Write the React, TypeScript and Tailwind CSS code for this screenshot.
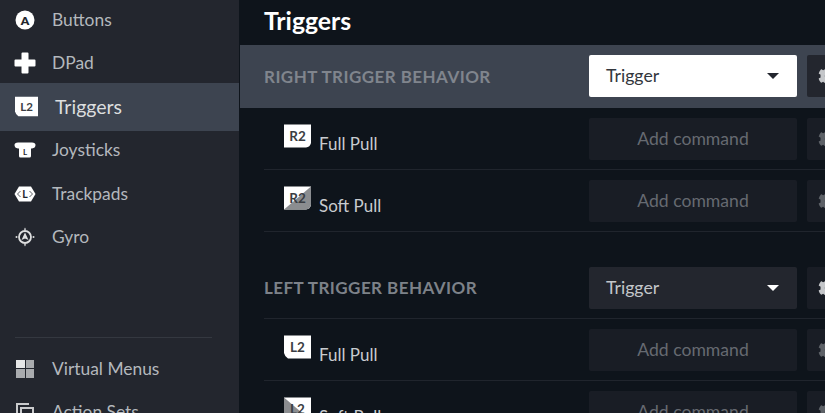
import React from 'react';
import { FaCog } from 'react-icons/fa';

const font = { fontFamily: 'Lato, sans-serif' };

const IconA = () => (
    <svg width="20" height="20" viewBox="0 0 20 20">
        <circle cx="10" cy="10" r="9.5" fill="#fff" />
        <text x="10" y="14.5" textAnchor="middle" fontSize="12" fontWeight="800" fill="#23262e" fontFamily="Lato, sans-serif">A</text>
    </svg>
);

const IconDPad = () => (
    <svg width="22" height="22" viewBox="0 0 22 22">
        <path d="M7.5 1.5a1 1 0 0 1 1-1h5a1 1 0 0 1 1 1V7.5h6a1 1 0 0 1 1 1v5a1 1 0 0 1-1 1h-6v6a1 1 0 0 1-1 1h-5a1 1 0 0 1-1-1v-6h-6a1 1 0 0 1-1-1v-5a1 1 0 0 1 1-1h6z" fill="#fff" />
    </svg>
);

// trigger key shape, cut corner on the outer side
const TriggerIcon = ({ label, side, half, small }: { label: string; side: 'L' | 'R'; half?: boolean; small?: boolean }) => {
    const d = side === 'R' ? 'M0 0.5H27V19Q26 23 22 23.5H0z' : 'M0 0.5H27V23.5H4Q1 22 0 18z';
    const halfD = side === 'R' ? 'M27 0.5V19Q26 23 22 23.5H0z' : 'M0 0.5L27 23.5H4Q1 22 0 18z';
    return (
        <svg width={small ? 23 : 27} height={small ? 21 : 24} viewBox="0 0 27 24">
            <path d={d} fill="#fff" />
            {half && <path d={halfD} fill="#8b8d90" />}
            <text x="13.5" y="17" textAnchor="middle" fontSize="13.5" fontWeight="700" fill="#3a3d43" fontFamily="Lato, sans-serif">{label}</text>
        </svg>
    );
};

const IconJoystick = () => (
    <svg width="22" height="16" viewBox="0 0 22 16">
        <path d="M0.5 3Q0.5 0.5 4 0.5H18Q21.5 0.5 21.5 3Q21.5 6 18 6.5H17V14Q17 15.5 15.5 15.5H6.5Q5 15.5 5 14V6.5H4Q0.5 6 0.5 3z" fill="#fff" />
        <text x="11" y="12.5" textAnchor="middle" fontSize="8" fontWeight="700" fill="#23262e" fontFamily="Lato, sans-serif">L</text>
    </svg>
);

const IconTrackpad = () => (
    <svg width="22" height="16" viewBox="0 0 22 16">
        <path d="M5 0.5H17L21.5 8L17 15.5H5L0.5 8z" fill="#fff" />
        <path d="M6.5 5L3.5 8L6.5 11M15.5 5L18.5 8L15.5 11" fill="none" stroke="#4a4d54" strokeWidth="0.9" />
        <text x="11" y="12" textAnchor="middle" fontSize="10.5" fontWeight="700" fill="#23262e" fontFamily="Lato, sans-serif">L</text>
    </svg>
);

const IconGyro = () => (
    <svg width="20" height="20" viewBox="0 0 20 20" fill="#dedfe0">
        <circle cx="10" cy="10" r="6" fill="none" stroke="#dedfe0" strokeWidth="1.8" />
        <path d="M10 5.5L13.5 13L10 11.5L6.5 13z" />
        <path d="M8.8 2.8L10 0.5L11.2 2.8zM8.8 17.2L10 19.5L11.2 17.2z" />
        <circle cx="1.5" cy="10" r="1" />
        <circle cx="18.5" cy="10" r="1" />
    </svg>
);

const IconMenus = () => (
    <div className="grid grid-cols-2 gap-[1px] w-[18px] h-[18px]">
        <div className="bg-[#e6e7e8]" />
        <div className="bg-[#a9abae]" />
        <div className="bg-[#a9abae]" />
        <div className="bg-[#a9abae]" />
    </div>
);

const IconSets = () => (
    <svg width="18" height="18" viewBox="0 0 18 18" fill="none" stroke="#c9cacc" strokeWidth="2">
        <path d="M1 13V1H13" />
        <rect x="5" y="5" width="12" height="12" />
    </svg>
);

const navItems = [
    { name: 'Buttons', icon: <IconA /> },
    { name: 'DPad', icon: <IconDPad /> },
    { name: 'Triggers', icon: <TriggerIcon label="L2" side="L" small />, active: true },
    { name: 'Joysticks', icon: <IconJoystick /> },
    { name: 'Trackpads', icon: <IconTrackpad /> },
    { name: 'Gyro', icon: <IconGyro /> },
];

const NavRow = ({ name, icon, active }: { name: string; icon: React.ReactNode; active?: boolean }) => (
    <div className={`flex items-center shrink-0 pl-[14px] ${active ? 'h-[48px] -mt-[2.5px] -mb-[2px] bg-[#3d4450] text-[#dcdedf] text-[19.5px]' : 'h-[43.5px] text-[#b4b8bd] text-[17.4px]'}`}>
        <div className={`flex items-center justify-center ${active ? 'w-[24px] mr-[17px]' : 'w-[22px] mr-[16px]'}`}>{icon}</div>
        <span>{name}</span>
    </div>
);

const GearBox = ({ dim, bg }: { dim?: boolean; bg: string }) => (
    <div className={`w-[42px] h-[42px] shrink-0 rounded-[2px] flex items-center justify-center ${bg}`}>
        <FaCog size={20} color={dim ? '#5d6167' : '#c4c6c9'} />
    </div>
);

const Select = ({ focused }: { focused?: boolean }) => (
    <div className={`w-[208px] h-[42px] shrink-0 rounded-[2px] flex items-center justify-between pl-[17px] pr-[18px] text-[17.7px] ${focused ? 'bg-white text-[#33373d]' : 'bg-[#23262e] text-[#c3c6ca]'}`}>
        <span className="pt-[1px]">Trigger</span>
        <div className={`w-0 h-0 border-x-[6px] border-x-transparent border-t-[6px] ${focused ? 'border-t-[#23262e]' : 'border-t-white'}`} />
    </div>
);

const PullRow = ({ label, icon }: { label: string; icon: React.ReactNode }) => (
    <div className="ml-6 h-[62px] pt-[1px] flex items-center border-b border-[#20252d]">
        <div className="ml-[20px] mr-[8px] -mt-[7px]">{icon}</div>
        <span className="text-[17px] text-[#c8cbcf] mt-[10px]">{label}</span>
        <div className="ml-auto flex items-center gap-[10px]">
            <div className="w-[208px] h-[42px] rounded-[2px] bg-[#191d25] flex items-center justify-center text-[17.6px] text-[#666a71]">Add command</div>
            <GearBox dim bg="bg-[#191d25]" />
        </div>
    </div>
);

const App: React.FC = () => {
    return (
        <div className="w-[825px] h-[413px] flex overflow-hidden bg-[#0e141b]" style={font}>
            <div className="w-[239px] shrink-0 h-full bg-[#23262e] flex flex-col overflow-hidden">
                <div className="-mt-[2px] flex flex-col">
                    {navItems.map((item) => (
                        <NavRow key={item.name} {...item} />
                    ))}
                </div>
                <div className="mt-[78px] ml-[15px] mr-[27px] border-t border-[#343840]" />
                <div className="mt-[9px] flex flex-col">
                    <NavRow name="Virtual Menus" icon={<IconMenus />} />
                    <NavRow name="Action Sets" icon={<IconSets />} />
                </div>
            </div>
            <div className="flex-1 min-w-0 overflow-hidden">
                <div className="w-[640px] pr-[31px] ml-[1px]">
                    <div className="h-[45px] pl-6 flex items-center pb-[4px] text-[24.8px] font-bold text-white">Triggers</div>
                    <div className="h-[63px] pb-[1px] pl-6 -mr-[31px] pr-[31px] bg-[#3d4450] flex items-center justify-between">
                        <span className="pt-[1px] text-[17px] font-bold tracking-[0.45px] text-[#80858d]">RIGHT TRIGGER BEHAVIOR</span>
                        <div className="flex items-center gap-[10px]">
                            <Select focused />
                            <GearBox bg="bg-[#23262e]" />
                        </div>
                    </div>
                    <PullRow label="Full Pull" icon={<TriggerIcon label="R2" side="R" />} />
                    <PullRow label="Soft Pull" icon={<TriggerIcon label="R2" side="R" half />} />
                    <div className="mt-[25px] ml-6 h-[62px] flex items-center justify-between border-b border-[#20252d]">
                        <span className="text-[17px] font-bold tracking-[0.45px] text-[#7d8289]">LEFT TRIGGER BEHAVIOR</span>
                        <div className="flex items-center gap-[10px]">
                            <Select />
                            <GearBox bg="bg-[#191d25]" />
                        </div>
                    </div>
                    <PullRow label="Full Pull" icon={<TriggerIcon label="L2" side="L" />} />
                    <PullRow label="Soft Pull" icon={<TriggerIcon label="L2" side="L" half />} />
                </div>
            </div>
        </div>
    );
};

export default App;
